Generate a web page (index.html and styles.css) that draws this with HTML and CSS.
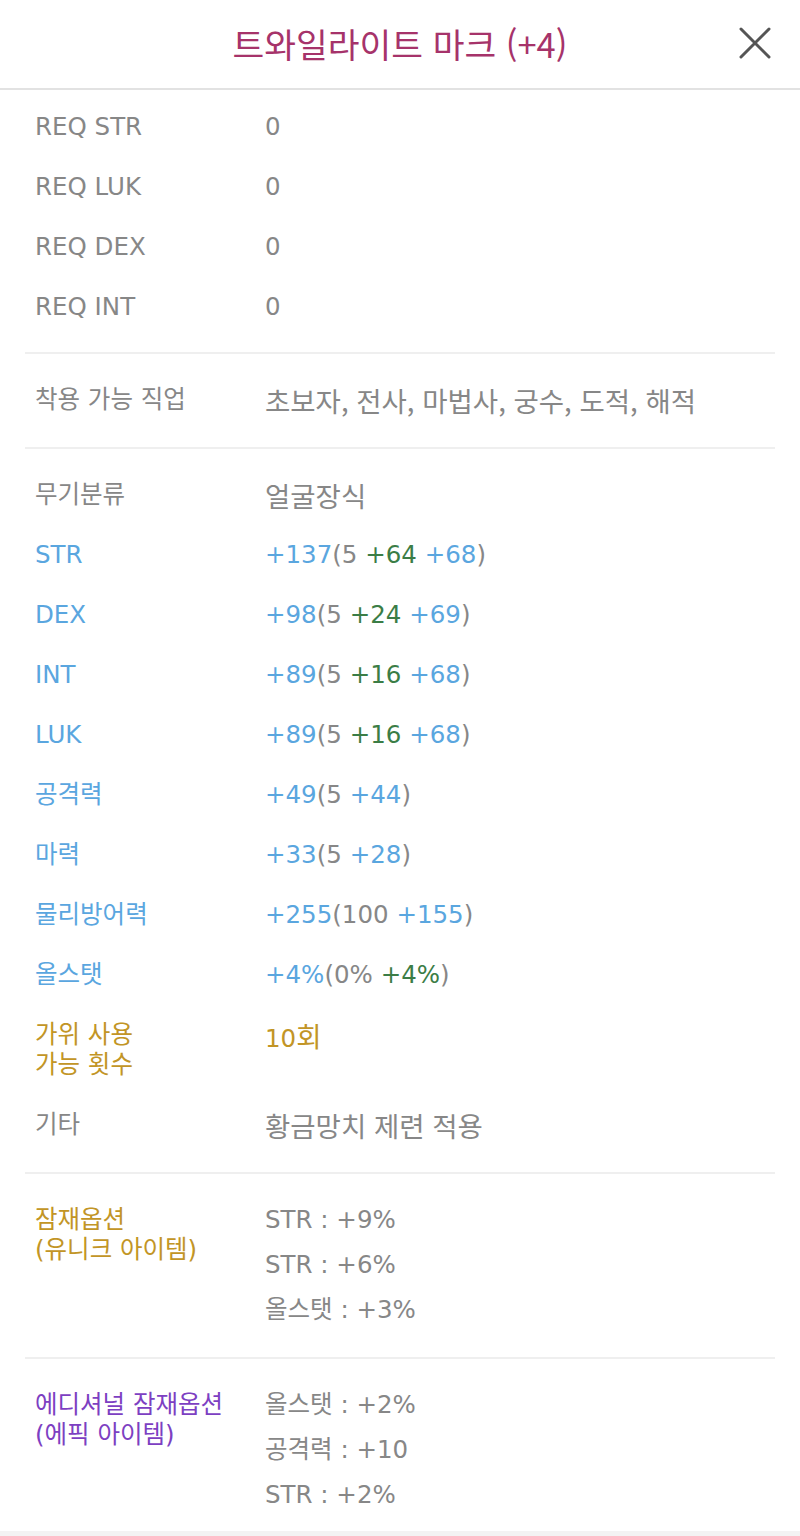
FILE: index.html
```html
<!DOCTYPE html>
<html lang="ko">
<head>
<meta charset="utf-8">
<title>트와일라이트 마크 (+4)</title>
<link rel="stylesheet" href="styles.css">
</head>
<body>
<div class="sheet">
  <header class="header">
    <div></div>
    <h1 class="title">트와일라이트 마크 (+4)</h1>
    <button class="close" aria-label="닫기">
      <svg width="32" height="32" viewBox="0 0 32 32"><path d="M2 2 L30 30 M30 2 L2 30" stroke="#555" stroke-width="3" stroke-linecap="round" fill="none"/></svg>
    </button>
  </header>
  <main class="content">
    <section class="section first">
      <div class="row"><div class="label">REQ STR</div><div class="value">0</div></div>
      <div class="row"><div class="label">REQ LUK</div><div class="value">0</div></div>
      <div class="row"><div class="label">REQ DEX</div><div class="value">0</div></div>
      <div class="row"><div class="label">REQ INT</div><div class="value">0</div></div>
    </section>
    <section class="section">
      <div class="row"><div class="label">착용 가능 직업</div><div class="value ko">초보자, 전사, 마법사, 궁수, 도적, 해적</div></div>
    </section>
    <section class="section">
      <div class="row"><div class="label">무기분류</div><div class="value ko">얼굴장식</div></div>
      <div class="row"><div class="label blue">STR</div><div class="value"><span class="blue">+137</span>(5 <span class="green">+64</span> <span class="blue">+68</span>)</div></div>
      <div class="row"><div class="label blue">DEX</div><div class="value"><span class="blue">+98</span>(5 <span class="green">+24</span> <span class="blue">+69</span>)</div></div>
      <div class="row"><div class="label blue">INT</div><div class="value"><span class="blue">+89</span>(5 <span class="green">+16</span> <span class="blue">+68</span>)</div></div>
      <div class="row"><div class="label blue">LUK</div><div class="value"><span class="blue">+89</span>(5 <span class="green">+16</span> <span class="blue">+68</span>)</div></div>
      <div class="row"><div class="label blue">공격력</div><div class="value"><span class="blue">+49</span>(5 <span class="blue">+44</span>)</div></div>
      <div class="row"><div class="label blue">마력</div><div class="value"><span class="blue">+33</span>(5 <span class="blue">+28</span>)</div></div>
      <div class="row"><div class="label blue">물리방어력</div><div class="value"><span class="blue">+255</span>(100 <span class="blue">+155</span>)</div></div>
      <div class="row"><div class="label blue">올스탯</div><div class="value"><span class="blue">+4%</span>(0% <span class="green">+4%</span>)</div></div>
      <div class="row"><div class="label gold">가위 사용<br>가능 횟수</div><div class="value gold">10<span class="ko">회</span></div></div>
      <div class="row"><div class="label">기타</div><div class="value ko">황금망치 제련 적용</div></div>
    </section>
    <section class="section">
      <div class="row"><div class="label gold">잠재옵션<br>(유니크 아이템)</div>
        <div class="value lines"><div>STR : +9%</div><div>STR : +6%</div><div>올스탯 : +3%</div></div></div>
    </section>
    <section class="section last">
      <div class="row"><div class="label purple">에디셔널 잠재옵션<br>(에픽 아이템)</div>
        <div class="value lines"><div>올스탯 : +2%</div><div>공격력 : +10</div><div>STR : +2%</div></div></div>
    </section>
  </main>
</div>
</body>
</html>
```
FILE: styles.css
```css
html, body {
  margin: 0;
  padding: 0;
}
body {
  background: #f3f3f3;
  font-family: "DejaVu Sans", "Noto Sans CJK KR", sans-serif;
  font-size: 24.5px;
  color: #878787;
}
.sheet {
  background: #fff;
}
.header {
  height: 88px;
  border-bottom: 2px solid #e2e2e2;
  display: grid;
  grid-template-columns: 1fr auto 1fr;
  align-items: center;
}
.title {
  margin: 0;
  font-family: "Noto Sans CJK KR", sans-serif;
  font-weight: 400;
  font-size: 34.5px;
  color: #a6336a;
  line-height: 40px;
  padding-bottom: 2px;
}
.close {
  justify-self: end;
  margin-right: 29px;
  border: 0;
  background: none;
  padding: 0;
  width: 32px;
  height: 32px;
  display: flex;
  margin-bottom: 2px;
}
.content {
  margin: 0 25px;
}
.section {
  padding: 16px 0 17px;
  border-bottom: 2px solid #efefef;
}
.section.first {
  padding: 7px 0 15px;
}
.section.last {
  border-bottom: 0;
  padding-bottom: 6px;
}
.row {
  display: grid;
  grid-template-columns: 230px 1fr;
  padding: 15px 10px;
  line-height: 30px;
}
.ko {
  font-family: "Noto Sans CJK KR", sans-serif;
  font-size: 27.5px;
}
.lines {
  display: flex;
  flex-direction: column;
  gap: 15px;
}
.blue { color: #5aa6df; }
.green { color: #3b7d46; }
.gold { color: #c29526; }
.purple { color: #7d3fc2; }
```
